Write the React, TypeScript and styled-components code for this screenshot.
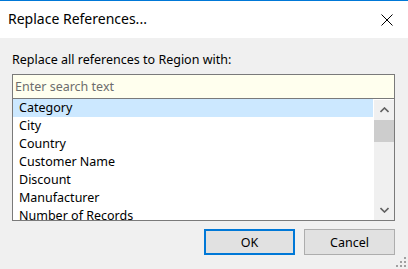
import React from "react"
import styled, { createGlobalStyle } from "styled-components"

const GlobalStyle = createGlobalStyle`
  html, body {
    margin: 0;
    padding: 0;
    background: #f0f0f0;
  }
  * {
    box-sizing: border-box;
  }
`

const font = `"Noto Sans", "Open Sans", sans-serif`

const Window = styled.div`
  position: relative;
  width: 408px;
  height: 269px;
  background: #f0f0f0;
  border-top: 1px solid #0078d7;
  font-family: ${font};
  color: #000;
  display: flex;
  flex-direction: column;
  overflow: hidden;
`

const TitleBar = styled.div`
  height: 37px;
  background: #fff;
  display: flex;
  align-items: center;
  justify-content: space-between;
  padding: 0 15px 0 8px;
`

const Title = styled.div`
  font-size: 14px;
  line-height: 20px;
  margin-top: -1px;
`

const CloseButton = styled.div`
  width: 12px;
  height: 12px;
  display: flex;
  margin-top: 1px;
`

const Body = styled.div`
  display: flex;
  flex-direction: column;
  padding: 14px 13px 0 12px;
`

const Label = styled.div`
  font-size: 12.5px;
  line-height: 16px;
  margin-bottom: 6px;
`

const Picker = styled.div`
  border: 1px solid #7a7a7a;
  height: 147px;
  display: flex;
  flex-direction: column;
  background: #fff;
`

const SearchBox = styled.div`
  height: 24px;
  flex: none;
  background: #ffffee;
  border-bottom: 1px solid #7a7a7a;
  display: flex;
  align-items: center;
  padding-left: 2px;
  font-size: 12.5px;
  color: #6d6d6d;
`

const ListArea = styled.div`
  flex: 1;
  display: flex;
  min-height: 0;
`

const Items = styled.div`
  flex: 1;
  overflow: hidden;
  padding-right: 1px;
`

const Item = styled.div<{ $selected?: boolean }>`
  height: 18px;
  line-height: 18px;
  font-size: 12.5px;
  padding-left: 6px;
  white-space: nowrap;
  background: ${(p) => (p.$selected ? "#cce8ff" : "transparent")};
`

const ScrollBar = styled.div`
  width: 20px;
  flex: none;
  margin-top: 1px;
  background: #f0f0f0;
  display: flex;
  flex-direction: column;
`

const ScrollArrow = styled.div`
  height: 20px;
  display: flex;
  align-items: center;
  justify-content: center;
`

const Track = styled.div`
  flex: 1;
`

const Thumb = styled.div`
  height: 22px;
  background: #cdcdcd;
`

const Buttons = styled.div`
  display: flex;
  justify-content: flex-end;
  gap: 9px;
  margin-top: 8px;
`

const Button = styled.div<{ $default?: boolean }>`
  width: 91px;
  height: 26px;
  display: flex;
  align-items: center;
  justify-content: center;
  font-size: 12.5px;
  background: #e1e1e1;
  border: ${(p) => (p.$default ? "2px solid #0078d7" : "1px solid #adadad")};
`

const Grip = styled.svg`
  position: absolute;
  right: 2px;
  bottom: 2px;
`

const items = [
  "Category",
  "City",
  "Country",
  "Customer Name",
  "Discount",
  "Manufacturer",
  "Number of Records",
]

export default function App() {
  return (
    <Window>
      <GlobalStyle />
      <TitleBar>
        <Title>Replace References...</Title>
        <CloseButton>
          <svg width="12" height="12" viewBox="0 0 12 12">
            <path d="M0.5 0.5 L11.5 11.5 M11.5 0.5 L0.5 11.5" stroke="#000" strokeWidth="1" fill="none" />
          </svg>
        </CloseButton>
      </TitleBar>
      <Body>
        <Label>Replace all references to Region with:</Label>
        <Picker>
          <SearchBox>Enter search text</SearchBox>
          <ListArea>
            <Items>
              {items.map((name, i) => (
                <Item key={name} $selected={i === 0}>
                  {name}
                </Item>
              ))}
            </Items>
            <ScrollBar>
              <ScrollArrow>
                <svg width="9" height="6" viewBox="0 0 9 6">
                  <path d="M0.5 5 L4.5 1 L8.5 5" stroke="#606060" strokeWidth="1.6" fill="none" />
                </svg>
              </ScrollArrow>
              <Thumb />
              <Track />
              <ScrollArrow>
                <svg width="9" height="6" viewBox="0 0 9 6">
                  <path d="M0.5 1 L4.5 5 L8.5 1" stroke="#606060" strokeWidth="1.6" fill="none" />
                </svg>
              </ScrollArrow>
            </ScrollBar>
          </ListArea>
        </Picker>
        <Buttons>
          <Button $default>OK</Button>
          <Button>Cancel</Button>
        </Buttons>
      </Body>
      <Grip width="10" height="10" viewBox="0 0 10 10">
        <g fill="#a0a0a0">
          <rect x="8" y="0" width="2" height="2" />
          <rect x="4" y="4" width="2" height="2" />
          <rect x="8" y="4" width="2" height="2" />
          <rect x="0" y="8" width="2" height="2" />
          <rect x="4" y="8" width="2" height="2" />
          <rect x="8" y="8" width="2" height="2" />
        </g>
      </Grip>
    </Window>
  )
}
